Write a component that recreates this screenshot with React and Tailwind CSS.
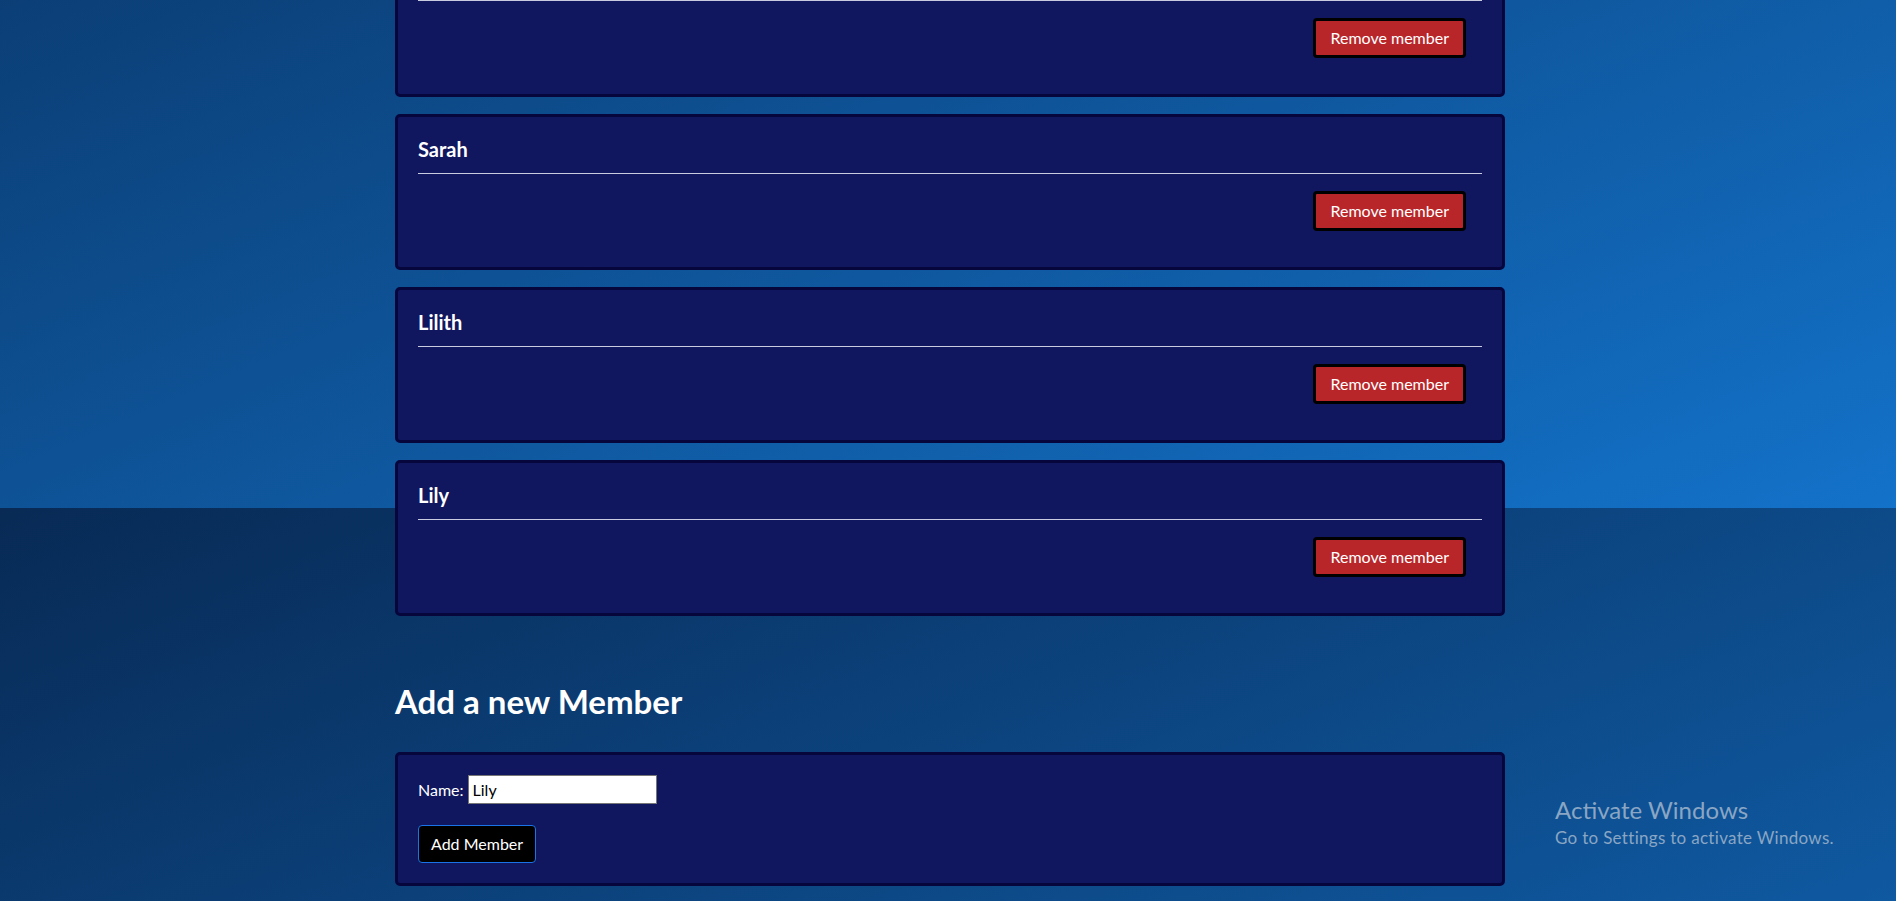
import React, { useState } from 'react';

const members = ['Mia', 'Sarah', 'Lilith', 'Lily'];

const MemberCard = ({ name, onRemove }) => (
  <div className="rounded-[5px] border-[3px] border-[#06063d] bg-[#10175e] p-5">
    <h5 className="text-[20px] leading-[24px] font-bold text-white">{name}</h5>
    <hr className="mt-3 border-0 border-t border-[#c9cbe0]" />
    <div className="mt-[17px] mb-4 flex justify-end pr-4">
      <button
        onClick={onRemove}
        className="h-10 rounded-[4px] border-[3px] border-black bg-[#b9262a] px-[14px] text-[16px] text-white"
      >
        Remove member
      </button>
    </div>
  </div>
);

export default function App() {
  const [list, setList] = useState(members);
  const [name, setName] = useState('Lily');

  return (
    <div className="relative h-screen overflow-hidden bg-[linear-gradient(157deg,#082a55,#1372c9)] bg-[length:100%_1028px] bg-[position:0_-520px] font-['Lato','Liberation_Sans',sans-serif]">
      <div className="mx-auto -mt-[59px] w-[1114px] pl-1">
        {/* Daftar member */}
        <div className="flex flex-col gap-[17px]">
          {list.map((m, i) => (
            <MemberCard key={m + i} name={m} onRemove={() => setList(list.filter((_, j) => j !== i))} />
          ))}
        </div>

        <h2 className="mt-[66px] mb-[32px] text-[33px] leading-[38px] font-bold text-white">Add a new Member</h2>

        {/* Form tambah member */}
        <div className="rounded-[5px] border-[3px] border-[#06063d] bg-[#10175e] p-5">
          <div className="flex items-center text-[16px] text-white">
            <label className="mr-1">Name:</label>
            <input
              value={name}
              onChange={(e) => setName(e.target.value)}
              className="h-[29px] w-[189px] border border-[#767676] bg-white px-1 text-[16px] text-black outline-none"
            />
          </div>
          <button className="mt-[21px] h-[38px] rounded-[4px] border border-[#1a73e8] bg-black px-3 text-[16px] text-white">
            Add Member
          </button>
        </div>
      </div>

      {/* watermark */}
      <div className="absolute left-[1555px] top-[795px] text-[#8aa6c4]">
        <div className="text-[24px] leading-[30px]">Activate Windows</div>
        <div className="mt-[3px] text-[17px] leading-[20px] tracking-[0.3px]">Go to Settings to activate Windows.</div>
      </div>
    </div>
  );
}
